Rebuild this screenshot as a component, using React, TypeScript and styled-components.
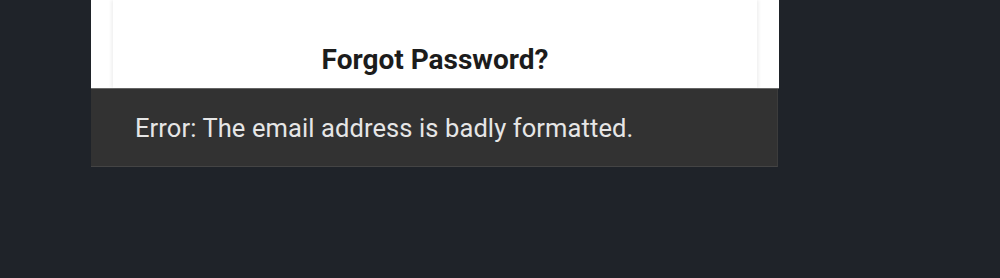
import { createGlobalStyle, styled } from "styled-components";

const GlobalStyle = createGlobalStyle`
    html, body {
        margin: 0;
        padding: 0;
        background: #1f2329;
        font-family: Roboto, "Liberation Sans", sans-serif;
    }
`

const Screen = styled.div`
    display: flex;
    flex-direction: column;
    width: 1000px;
    height: 278px;
    padding-left: 91px;
    box-sizing: border-box;
`

const Page = styled.div`
    background: #ffffff;
    width: 688px;
    height: 89px;
    display: flex;
    justify-content: center;
    box-sizing: border-box;
    border-bottom: 1px solid #6a6a6a;
`

const Card = styled.div`
    background: #ffffff;
    width: 644px;
    margin: 0 22px;
    box-shadow: -2px 0 3px rgba(0, 0, 0, 0.06), 2px 0 3px rgba(0, 0, 0, 0.06);
    display: flex;
    align-items: flex-end;
    justify-content: center;
    padding-bottom: 12px;
    box-sizing: border-box;
`

const ForgotLink = styled.span`
    color: #1c1c1c;
    font-weight: 700;
    font-size: 28px;
    line-height: 32px;
`

const Snackbar = styled.div`
    background: #323232;
    width: 687px;
    height: 78px;
    box-sizing: border-box;
    padding-left: 44px;
    display: flex;
    align-items: center;
    border-bottom: 1px solid #444;
    border-right: 1px solid #3c3c3c;
`

const SnackText = styled.span`
    color: #e6e6e6;
    font-size: 25.5px;
    letter-spacing: 0.1px;
`

const App = () => {
    return (
        <Screen>
            <GlobalStyle />
            <Page>
                <Card>
                    <ForgotLink>Forgot Password?</ForgotLink>
                </Card>
            </Page>
            <Snackbar>
                <SnackText>Error: The email address is badly formatted.</SnackText>
            </Snackbar>
        </Screen>
    );
}

export default App;
